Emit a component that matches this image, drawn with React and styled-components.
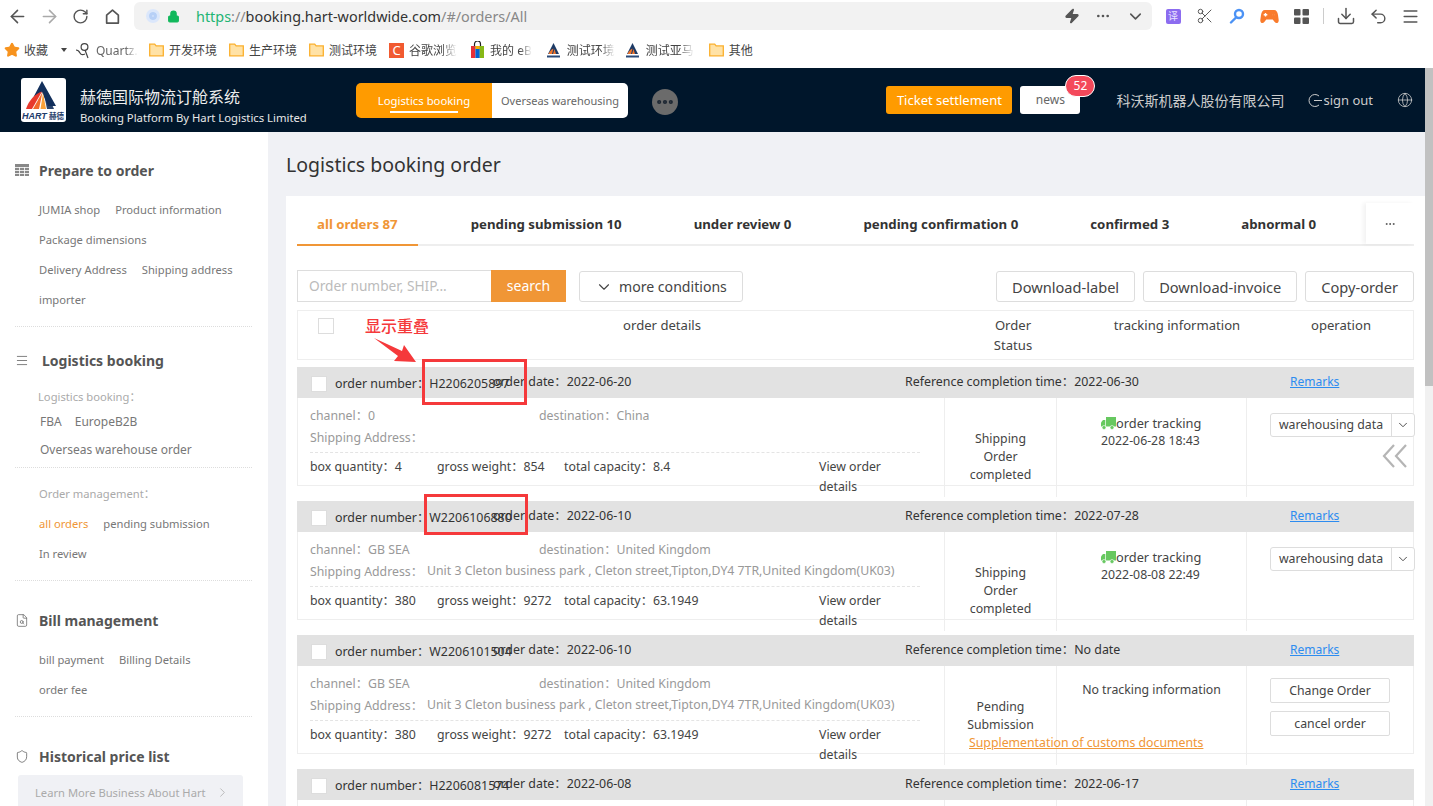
import React from 'react';
import styled, { createGlobalStyle } from 'styled-components';
import {
  ArrowLeft, ArrowRight, RotateCw, Lock, Zap, MoreHorizontal, ChevronDown, Scissors,
  Download, Undo2, Menu, Star, Globe, ChevronRight, FileSearch, Shield,
} from 'lucide-react';

const FONT = '"Noto Sans", "Noto Sans CJK SC", sans-serif';

const GlobalStyle = createGlobalStyle`
  html, body { margin: 0; padding: 0; height: 100%; overflow: hidden; }
  body { font-family: ${FONT}; background: #fff; }
  * { box-sizing: border-box; }
`;

const BOOKMARKS = [
  { icon: 'folder', text: '开发环境', gap: 12 },
  { icon: 'folder', text: '生产环境', gap: 12 },
  { icon: 'folder', text: '测试环境', gap: 12 },
  { icon: 'c', text: '谷歌浏览', gap: 13, fade: true },
  { icon: 'bag', text: '我的 eB', gap: 13, fade: true },
  { icon: 'hart', text: '测试环境', gap: 9, fade: true },
  { icon: 'hart', text: '测试亚马', gap: 15, fade: true },
  { icon: 'folder', text: '其他', gap: 0 },
];

const TABS = [
  { label: 'all orders 87', active: true },
  { label: 'pending submission 10' },
  { label: 'under review 0' },
  { label: 'pending confirmation 0' },
  { label: 'confirmed 3' },
  { label: 'abnormal 0' },
];

const UK = 'Unit 3 Cleton business park , Cleton street,Tipton,DY4 7TR,United Kingdom(UK03)';

const ORDERS = [
  {
    number: 'H2206205897', date: '2022-06-20', ref: '2022-06-30', channel: '0', dest: 'China', address: '',
    box: '4', weight: '854', capacity: '8.4', status: ['Shipping', 'Order', 'completed'],
    tracking: '2022-06-28 18:43', mark: { left: 125, top: -8, w: 105, h: 46 },
  },
  {
    number: 'W2206106880', date: '2022-06-10', ref: '2022-07-28', channel: 'GB SEA', dest: 'United Kingdom', address: UK,
    box: '380', weight: '9272', capacity: '63.1949', status: ['Shipping', 'Order', 'completed'],
    tracking: '2022-08-08 22:49', mark: { left: 127, top: -7, w: 104, h: 41 },
  },
  {
    number: 'W2206101504', date: '2022-06-10', ref: 'No date', channel: 'GB SEA', dest: 'United Kingdom', address: UK,
    box: '380', weight: '9272', capacity: '63.1949', status: ['Pending', 'Submission'], pending: true,
  },
  {
    number: 'H2206081574', date: '2022-06-08', ref: '2022-06-17', channel: 'GB SEA', dest: 'United Kingdom', address: UK,
    box: '380', weight: '9272', capacity: '63.1949', status: [],
  },
];

const Root = styled.div`
  width: 100%;
  height: 100vh;
  display: flex;
  flex-direction: column;
  overflow: hidden;
`;

const Toolbar = styled.div`
  height: 36px;
  display: flex;
  align-items: flex-start;
  padding-top: 2px;
  color: #555;
`;

const NavButton = styled.div`
  width: 31.5px;
  height: 28px;
  display: flex;
  align-items: center;
  justify-content: center;
  color: ${p => (p.$off ? '#aaa' : '#555')};
`;

const NavGroup = styled.div`
  display: flex;
  padding-left: 2px;
  width: 134px;
`;

const AddressBar = styled.div`
  width: 1018px;
  height: 28px;
  background: #f2f2f2;
  border-radius: 6px;
  display: flex;
  align-items: center;
  padding: 0 10px;
`;

const SiteDot = styled.span`
  width: 14px;
  height: 14px;
  border-radius: 50%;
  background: #cfe0fb;
  border: 3px solid #dbe7fb;
  box-shadow: inset 0 0 0 3px #b7d0f7;
  margin: 0 7px 0 2px;
`;

const Url = styled.div`
  margin-left: 16px;
  font-size: 14.4px;
  color: #333;
  white-space: nowrap;
`;

const UrlPart = styled.span`
  color: ${p => p.$color};
`;

const BarRight = styled.div`
  margin-left: auto;
  margin-right: -3px;
  display: flex;
  align-items: center;
  gap: 15px;
  color: #555;
`;

const Extensions = styled.div`
  display: flex;
  align-items: center;
  height: 28px;
  margin-left: 5px;
`;

const ExtSlot = styled.div`
  width: 32px;
  height: 28px;
  display: flex;
  align-items: center;
  justify-content: center;
`;

const ExtDivider = styled.div`
  width: 1px;
  height: 16px;
  background: #ccc;
  margin: 0 6px 0 6px;
`;

const YiBadge = styled.span`
  width: 15px;
  height: 15px;
  border-radius: 2px;
  background: #8c6cf0;
  color: #e9e2ff;
  font-size: 10px;
  line-height: 15px;
  text-align: center;
`;

const Bookmarks = styled.div`
  height: 32px;
  display: flex;
  align-items: center;
  padding: 0 0 4px 4px;
  font-size: 12px;
  color: #444;
  white-space: nowrap;
`;

const Favorites = styled.div`
  display: flex;
  align-items: center;
  gap: 4px;
  width: 71px;
`;

const Caret = styled.span`
  width: 0;
  height: 0;
  margin-left: 9px;
  border-left: 3.5px solid transparent;
  border-right: 3.5px solid transparent;
  border-top: 4px solid #444;
`;

const Mark = styled.div`
  display: flex;
  align-items: center;
  gap: 5px;
  margin-right: ${p => p.$gap}px;
`;

const MarkText = styled.span`
  ${p => p.$fade && `
    -webkit-mask-image: linear-gradient(to right, #000 70%, transparent);
    mask-image: linear-gradient(to right, #000 70%, transparent);
  `}
`;

const QuartzMark = styled(Mark)`
  width: 74px;
  color: #666;
`;

const CTile = styled.span`
  width: 15px;
  height: 15px;
  background: #f15a30;
  color: #fff;
  font-size: 13px;
  line-height: 15px;
  text-align: center;
`;

const Frame = styled.div`
  flex: 1;
  min-height: 0;
  display: flex;
`;

const Scrollbar = styled.div`
  width: 8px;
  background: #f1f1f1;
`;

const ScrollThumb = styled.div`
  height: 318px;
  background: #c1c1c1;
`;

const Page = styled.div`
  flex: 1;
  min-width: 0;
  display: flex;
  flex-direction: column;
  position: relative;
`;

const Header = styled.header`
  height: 64px;
  flex: none;
  background: #00162b;
  display: flex;
  align-items: center;
  padding-left: 21px;
  color: #fff;
`;

const Brand = styled.div`
  width: 335px;
  display: flex;
  align-items: center;
  gap: 14px;
`;

const BrandText = styled.div`
  display: flex;
  flex-direction: column;
  gap: 1px;
  padding-top: 10px;
  white-space: nowrap;
`;

const BrandTitle = styled.div`
  font-size: 16px;
  line-height: 24px;
  color: #eee;
`;

const BrandSub = styled.div`
  font-size: 11.3px;
  line-height: 16px;
  color: #e8e8e8;
`;

const ModeSwitch = styled.div`
  width: 272px;
  height: 35px;
  margin-top: 1px;
  border-radius: 5px;
  overflow: hidden;
  display: flex;
`;

const ModeItem = styled.div`
  width: 136px;
  display: flex;
  align-items: center;
  justify-content: center;
  position: relative;
  font-size: ${p => (p.$active ? 11.3 : 11)}px;
  white-space: nowrap;
  background: ${p => (p.$active ? '#ff9b00' : '#fff')};
  color: ${p => (p.$active ? '#fff' : '#666')};
  ${p => p.$active && `
    &::after {
      content: '';
      position: absolute;
      left: 34px;
      bottom: 5px;
      width: 68px;
      height: 2px;
      background: #fff;
    }
  `}
`;

const MoreCircle = styled.div`
  width: 26px;
  height: 26px;
  margin: 3px 0 0 24px;
  border-radius: 50%;
  background: #6b6b6b;
  display: flex;
  align-items: center;
  justify-content: center;
  color: #1d2733;
`;

const HeaderRight = styled.div`
  margin-left: auto;
  display: flex;
  align-items: center;
  padding-right: 12px;
`;

const TicketButton = styled.div`
  width: 126px;
  height: 28px;
  border-radius: 3px;
  background: #ff9b00;
  font-size: 13px;
  line-height: 28px;
  text-align: center;
  white-space: nowrap;
`;

const NewsButton = styled.div`
  width: 60px;
  height: 28px;
  margin-left: 8px;
  border-radius: 3px;
  background: #fff;
  color: #666;
  font-size: 12px;
  line-height: 28px;
  text-align: center;
  position: relative;
`;

const Badge = styled.span`
  position: absolute;
  right: -15px;
  top: -11px;
  width: 30px;
  height: 22px;
  border-radius: 11px;
  border: 1px solid #fff;
  background: #f4495b;
  color: #fff;
  font-size: 12px;
  line-height: 20px;
  text-align: center;
`;

const Company = styled.div`
  margin-left: 36px;
  font-size: 14px;
  color: #ccc;
  white-space: nowrap;
`;

const SignOut = styled.div`
  margin-left: 24px;
  display: flex;
  align-items: center;
  font-size: 13px;
  color: #ccc;
  white-space: nowrap;
`;

const GlobeSlot = styled.div`
  margin-left: 24px;
  display: flex;
  color: #ccc;
`;

const Body = styled.div`
  flex: 1;
  min-height: 0;
  display: flex;
  overflow: hidden;
`;

const Sidebar = styled.aside`
  width: 268px;
  flex: none;
  background: #fff;
  padding: 27px 16px 0 15px;
`;

const SideSection = styled.section`
  border-bottom: ${p => (p.$last ? 'none' : '1px dotted #ddd')};
  padding-bottom: ${p => p.$pb ?? 12}px;
  margin-bottom: ${p => p.$mb ?? 22}px;
`;

const SideTitle = styled.div`
  display: flex;
  align-items: center;
  gap: ${p => p.$gap ?? 10}px;
  height: 22px;
  margin-bottom: ${p => p.$after ?? 13}px;
  font-size: 14px;
  font-weight: 700;
  color: #555;
  white-space: nowrap;
`;

const SideIcon = styled.span`
  width: 14px;
  display: flex;
  justify-content: center;
  color: #666;
`;

const SideRow = styled.div`
  display: flex;
  gap: ${p => p.$gap ?? 15}px;
  height: ${p => p.$h ?? 30}px;
  align-items: center;
  padding-left: ${p => p.$pl ?? 24}px;
  font-size: ${p => p.$size ?? 11.2}px;
  color: ${p => p.$color ?? '#777'};
  white-space: nowrap;
`;

const SideLink = styled.span`
  color: ${p => (p.$active ? '#f09636' : 'inherit')};
`;

const LearnMore = styled.div`
  width: 225px;
  height: 40px;
  margin-left: 3px;
  padding: 0 0 6px 17px;
  border-radius: 3px;
  background: #f0f1f5;
  color: #aaa;
  font-size: 11.2px;
  display: flex;
  align-items: center;
  gap: 9px;
  white-space: nowrap;
`;

const Main = styled.main`
  flex: 1;
  min-width: 0;
  background: #f0f1f5;
  padding-left: 18px;
`;

const Heading = styled.h1`
  margin: 0;
  height: 64px;
  font-size: 19.5px;
  font-weight: 400;
  line-height: 66px;
  color: #333;
  white-space: nowrap;
`;

const Panel = styled.div`
  background: #fff;
  height: 700px;
  padding: 7px 11px 0;
`;

const TabBar = styled.div`
  height: 43px;
  display: flex;
  position: relative;
  border-bottom: 2px solid #eee;
`;

const Tab = styled.div`
  height: 43px;
  padding: 0 20px;
  margin-right: 32px;
  display: flex;
  align-items: center;
  font-size: 13.25px;
  font-weight: 700;
  white-space: nowrap;
  color: ${p => (p.$active ? '#f09636' : '#333')};
  border-bottom: 2px solid ${p => (p.$active ? '#f09636' : 'transparent')};
  &:first-child { margin-right: 33px; }
`;

const TabMore = styled.div`
  position: absolute;
  right: 0;
  top: 0;
  bottom: 0;
  width: 48px;
  background: #fff;
  box-shadow: -3px 0 4px rgba(0, 0, 0, 0.05);
  display: flex;
  align-items: center;
  justify-content: center;
  color: #555;
`;

const FilterRow = styled.div`
  display: flex;
  align-items: flex-start;
  margin-top: 24px;
  height: 40px;
`;

const SearchInput = styled.div`
  width: 194px;
  height: 32px;
  border: 1px solid #ddd;
  border-right: none;
  padding-left: 11px;
  font-size: 13.7px;
  line-height: 29px;
  color: #bbb;
  white-space: nowrap;
`;

const SearchButton = styled.div`
  width: 75px;
  height: 32px;
  background: #f09636;
  color: #fff;
  font-size: 14px;
  line-height: 31px;
  text-align: center;
`;

const OutlineButton = styled.div`
  height: 31px;
  padding: 0 15px;
  margin-top: 1px;
  margin-left: ${p => p.$ml ?? 8}px;
  ${p => p.$push && 'margin-left: auto;'}
  border: 1px solid #ddd;
  border-radius: 3px;
  display: flex;
  align-items: center;
  gap: 6px;
  font-size: ${p => p.$size ?? 14.6}px;
  color: #444;
  white-space: nowrap;
`;

const TableHead = styled.div`
  height: 50px;
  border: 1px solid #eee;
  display: grid;
  grid-template-columns: 60px 608px 94px 234px 94px;
  font-size: 13.1px;
  line-height: 20px;
  color: #444;
  text-align: center;
  padding-top: 4px;
`;

const CheckBox = styled.span`
  display: block;
  width: 16px;
  height: 16px;
  background: #fff;
  border: 1px solid #ddd;
`;

const HeadCheck = styled.div`
  padding: 3px 0 0 20px;
`;

const HeadCell = styled.div`
  padding: 0 16px;
`;

const OrderList = styled.div`
  margin-top: 7px;
`;

const Order = styled.article`
  height: 134px;
`;

const OrderHeader = styled.div`
  height: 31px;
  background: #e2e2e2;
  display: flex;
  align-items: center;
  padding-bottom: 3px;
  position: relative;
  font-size: 12.4px;
  color: #333;
  white-space: nowrap;
`;

const HeaderCheck = styled.div`
  width: 38px;
  padding: 5px 0 0 14px;
`;

const NumberCell = styled.div`
  width: 158px;
  padding-top: 4px;
`;

const DateCell = styled.div`
  width: 412px;
`;

const RefCell = styled.div`
  width: 385px;
`;

const RemarkLink = styled.a`
  font-size: 12px;
  color: #2d8cf0;
  text-decoration: underline;
`;

const RedBox = styled.div`
  position: absolute;
  border: 3px solid #f5393b;
  pointer-events: none;
`;

const OrderBody = styled.div`
  height: 88px;
  display: grid;
  grid-template-columns: 647px 112px 190px 168px;
  border: 1px solid #eee;
  border-top: none;
  font-size: 12.3px;
  color: #444;
`;

const DetailCell = styled.div`
  padding: 6px 24px 0 12px;
  border-right: 1px solid #eee;
`;

const InfoLine = styled.div`
  display: flex;
  height: 21px;
  align-items: center;
  color: #999;
  white-space: nowrap;
  margin-bottom: 1px;
`;

const InfoChannel = styled.span`
  width: 229px;
`;

const InfoValue = styled.span`
  margin-left: 4px;
`;

const StatLine = styled.div`
  display: flex;
  border-top: 1px dashed #e4e4e4;
  margin-top: 5px;
  padding-top: 4px;
  line-height: 20px;
  white-space: nowrap;
`;

const Stat = styled.span`
  width: 127px;
`;

const ViewLink = styled.span`
  width: 90px;
  margin-left: 128px;
  white-space: normal;
`;

const StatusCell = styled.div`
  border-right: 1px solid #eee;
  padding-top: 32px;
  line-height: 18px;
  text-align: center;
  position: relative;
  white-space: nowrap;
`;

const CustomsLink = styled.div`
  margin-left: 24px;
  width: 234px;
  text-align: left;
  color: #f09636;
  text-decoration: underline;
`;

const TrackCell = styled.div`
  border-right: 1px solid #eee;
  padding-top: ${p => (p.$center ? 15 : 16)}px;
  line-height: 18px;
  text-align: ${p => (p.$center ? 'center' : 'left')};
  padding-left: ${p => (p.$center ? 0 : 44)}px;
  white-space: nowrap;
`;

const TrackTitle = styled.div`
  display: flex;
  align-items: center;
  font-size: 12.8px;
`;

const OpCell = styled.div`
  padding: ${p => (p.$stacked ? 12 : 15)}px 0 0 23px;
  display: flex;
  flex-direction: column;
  align-items: flex-start;
  gap: 8px;
`;

const SplitButton = styled.div`
  width: 145px;
  height: 24px;
  border: 1px solid #ddd;
  border-radius: 3px;
  display: flex;
  background: #fff;
  font-size: 12.3px;
  line-height: 22px;
  white-space: nowrap;
`;

const SplitLabel = styled.span`
  width: 121px;
  text-align: center;
  border-right: 1px solid #ddd;
`;

const SplitCaret = styled.span`
  flex: 1;
  display: flex;
  align-items: center;
  justify-content: center;
`;

const PlainButton = styled.div`
  width: 120px;
  height: 25px;
  border: 1px solid #ddd;
  border-radius: 2px;
  font-size: 12.3px;
  line-height: 23px;
  text-align: center;
`;

const CollapseArrow = styled.div`
  position: absolute;
  left: 1382px;
  top: 376px;
  display: flex;
`;

const AnnotationText = styled.div`
  position: absolute;
  left: 365px;
  top: 246px;
  font-size: 16px;
  line-height: 24px;
  color: #f5393b;
  font-weight: 500;
  white-space: nowrap;
`;

const AnnotationArrow = styled.svg`
  position: absolute;
  left: 372px;
  top: 268px;
`;

const FolderIcon = () => (
  <svg width="15" height="14" viewBox="0 0 15 14">
    <path d="M.7 12.8V1.2h5l1.4 1.7h7.2v9.900z" fill="#ffe2a6" stroke="#fbb02d" strokeWidth="1.3" />
  </svg>
);

const BagIcon = () => (
  <svg width="15" height="18" viewBox="0 0 15 18">
    <path d="M4.5 5V3a3 3 0 0 1 6 0v2" fill="none" stroke="#222" strokeWidth="1.2" />
    <rect x="1" y="5" width="4.4" height="12" fill="#e53238" />
    <rect x="5.4" y="5" width="4.4" height="12" fill="#0064d2" />
    <rect x="9.8" y="5" width="4.2" height="12" fill="#86b817" />
    <rect x="5.4" y="5" width="4.4" height="3" fill="#f5af02" />
  </svg>
);

const HartMini = () => (
  <svg width="17" height="17" viewBox="0 0 17 17">
    <path d="M8.5 1 14 12H3z" fill="#1d3b66" />
    <path d="M3.5 12c1.4-3 3-4.5 5-5.5L7 12zM8 12l1.5-5 1.500 5z" fill="#f0762d" />
    <rect x="2" y="13.5" width="13" height="2" fill="#2a4a78" />
  </svg>
);

const QuartzIcon = () => (
  <svg width="16" height="17" viewBox="0 0 16 17" fill="none" stroke="#444" strokeWidth="1.2">
    <circle cx="9.5" cy="5" r="3.4" />
    <path d="M1 8c2 0 3 1 4 3s3 2 5 1M10 8l3 8" />
  </svg>
);

const HomeIcon = () => (
  <svg width="17" height="17" viewBox="0 0 16 16" fill="none" stroke="#555" strokeWidth="1.6">
    <path d="M2.5 14.2V6.800L8 2l5.500 4.800v7.400z" strokeLinejoin="round" />
  </svg>
);

const Gamepad = () => (
  <svg width="19" height="15" viewBox="0 0 19 15">
    <path d="M5 1h9c2.500 0 3.500 2 4 5l.7 5c.3 2.800-2.500 4-4 2l-2-2.500H6.300l-2 2.500c-1.500 2-4.300.8-4-2l.7-5C1.500 3 2.500 1 5 1z" fill="#f97b2c" />
    <path d="M5.500 4v3.500M3.700 5.700h3.600M12 5.700h.1M14.500 5.700h.1" stroke="#fff" strokeWidth="1.400" />
  </svg>
);

const Tiles = () => (
  <svg width="15" height="15" viewBox="0 0 15 15" fill="#555">
    <rect width="6.500" height="6.500" rx="1" />
    <rect x="8.500" width="6.500" height="6.500" rx="1" />
    <rect y="8.500" width="6.500" height="6.500" rx="1" />
    <rect x="8.500" y="8.500" width="6.500" height="6.500" rx="1" />
  </svg>
);

const BlueLens = () => (
  <svg width="16" height="16" viewBox="0 0 16 16" fill="none" stroke="#4b92f5" strokeWidth="2.400">
    <circle cx="10" cy="6" r="4" />
    <path d="M7 9.500 2 14.500" strokeLinecap="round" />
  </svg>
);

const GridIcon = () => (
  <svg width="14" height="12" viewBox="0 0 14 12">
    <rect width="14" height="12" fill="#888" />
    <path d="M0 3.500h14M0 6.500h14M0 9.500h14M4.500 3v9M9.500 3v9" stroke="#fff" strokeWidth=".8" />
  </svg>
);

const SignOutIcon = () => (
  <svg width="15" height="15" viewBox="0 0 15 15" fill="none" stroke="#ccc" strokeWidth="1">
    <path d="M11 3a6 6 0 1 0 0 9" />
    <path d="M6 7.500h8" />
  </svg>
);

const TruckIcon = () => (
  <svg width="15" height="14" viewBox="0 0 15 14" fill="#67c860">
    <rect x="5" y="1" width="10" height="9.500" />
    <path d="M4.300 4H2L0 6.500v4h4.300z" />
    <circle cx="3" cy="11.500" r="2" stroke="#fff" strokeWidth=".6" />
    <circle cx="11" cy="11.500" r="2" stroke="#fff" strokeWidth=".6" />
  </svg>
);

const Logo = () => (
  <svg width="45" height="44" viewBox="0 0 45 44">
    <rect width="45" height="44" rx="3" fill="#fff" />
    <path d="M21 3 35 28H27L21 14 12 20z" fill="#13305c" />
    <path d="M5 31C8 22 14 16 21 13.500L11 31z" fill="#e8392c" />
    <path d="M12 31 21.500 14 18 31z" fill="#f26a2c" />
    <path d="M19.500 31 22 15 25 31z" fill="#f8a13a" />
    <path d="M26 31 22.500 14 30 24 33 31z" fill="#13305c" opacity=".9" />
    <text x="1" y="41" fontFamily="Liberation Sans, sans-serif" fontStyle="italic" fontWeight="700" fontSize="9" fill="#1f3d6b">HART</text>
    <text x="28" y="41" fontFamily="Noto Sans CJK SC, sans-serif" fontWeight="700" fontSize="7.500" fill="#1f3d6b">赫德</text>
  </svg>
);

const MARK_ICONS = {
  folder: <FolderIcon />,
  c: <CTile>C</CTile>,
  bag: <BagIcon />,
  hart: <HartMini />,
};

const OrderRow = ({ order }) => (
  <Order>
    <OrderHeader>
      <HeaderCheck><CheckBox /></HeaderCheck>
      <NumberCell>order number：{order.number}</NumberCell>
      <DateCell>order date：{order.date}</DateCell>
      <RefCell>Reference completion time：{order.ref}</RefCell>
      <RemarkLink>Remarks</RemarkLink>
      {order.mark && (
        <RedBox
          style={{ left: order.mark.left, top: order.mark.top, width: order.mark.w, height: order.mark.h }}
        />
      )}
    </OrderHeader>
    <OrderBody>
      <DetailCell>
        <InfoLine>
          <InfoChannel>channel：{order.channel}</InfoChannel>
          <span>destination：{order.dest}</span>
        </InfoLine>
        <InfoLine>
          Shipping Address：<InfoValue>{order.address}</InfoValue>
        </InfoLine>
        <StatLine>
          <Stat>box quantity：{order.box}</Stat>
          <Stat>gross weight：{order.weight}</Stat>
          <Stat>total capacity：{order.capacity}</Stat>
          <ViewLink>View order details</ViewLink>
        </StatLine>
      </DetailCell>
      <StatusCell>
        {order.status.map(line => <div key={line}>{line}</div>)}
        {order.pending && <CustomsLink>Supplementation of customs documents</CustomsLink>}
      </StatusCell>
      {order.tracking ? (
        <TrackCell>
          <TrackTitle><TruckIcon />order tracking</TrackTitle>
          {order.tracking}
        </TrackCell>
      ) : (
        <TrackCell $center>{order.status.length ? 'No tracking information' : ''}</TrackCell>
      )}
      <OpCell $stacked={order.pending}>
        {order.tracking && (
          <SplitButton>
            <SplitLabel>warehousing data</SplitLabel>
            <SplitCaret><ChevronDown size={14} strokeWidth={1.6} color="#444" /></SplitCaret>
          </SplitButton>
        )}
        {order.pending && (
          <>
            <PlainButton>Change Order</PlainButton>
            <PlainButton>cancel order</PlainButton>
          </>
        )}
      </OpCell>
    </OrderBody>
  </Order>
);

export default function App() {
  return (
    <Root>
      <GlobalStyle />
      <Toolbar>
        <NavGroup>
          <NavButton><ArrowLeft size={21} strokeWidth={1.8} /></NavButton>
          <NavButton $off><ArrowRight size={21} strokeWidth={1.8} /></NavButton>
          <NavButton><RotateCw size={17} strokeWidth={2} /></NavButton>
          <NavButton><HomeIcon /></NavButton>
        </NavGroup>
        <AddressBar>
          <SiteDot />
          <Lock size={13} color="#12b85c" fill="#12b85c" strokeWidth={2} />
          <Url>
            <UrlPart $color="#22b573">https</UrlPart>
            <UrlPart $color="#888">://</UrlPart>
            booking.hart-worldwide.com
            <UrlPart $color="#888">/#/orders/All</UrlPart>
          </Url>
          <BarRight>
            <Zap size={16} color="#555" fill="#555" />
            <MoreHorizontal size={16} />
            <ChevronDown size={19} />
          </BarRight>
        </AddressBar>
        <Extensions>
          <ExtSlot><YiBadge>译</YiBadge></ExtSlot>
          <ExtSlot><Scissors size={18} strokeWidth={1.3} /></ExtSlot>
          <ExtSlot><BlueLens /></ExtSlot>
          <ExtSlot><Gamepad /></ExtSlot>
          <ExtSlot><Tiles /></ExtSlot>
          <ExtDivider />
          <ExtSlot><Download size={20} strokeWidth={1.8} /></ExtSlot>
          <ExtSlot><Undo2 size={19} strokeWidth={1.8} /></ExtSlot>
          <ExtSlot><Menu size={19} strokeWidth={1.8} /></ExtSlot>
        </Extensions>
      </Toolbar>
      <Bookmarks>
        <Favorites>
          <Star size={16} color="#f7931e" fill="#f7931e" />
          收藏
          <Caret />
        </Favorites>
        <QuartzMark $gap={0}>
          <QuartzIcon />
          <MarkText $fade>Quartz.</MarkText>
        </QuartzMark>
        {BOOKMARKS.map((item, i) => (
          <Mark key={i} $gap={item.gap}>
            {MARK_ICONS[item.icon]}
            <MarkText $fade={item.fade}>{item.text}</MarkText>
          </Mark>
        ))}
      </Bookmarks>
      <Frame>
        <Page>
          <Header>
            <Brand>
              <Logo />
              <BrandText>
                <BrandTitle>赫德国际物流订舱系统</BrandTitle>
                <BrandSub>Booking Platform By Hart Logistics Limited</BrandSub>
              </BrandText>
            </Brand>
            <ModeSwitch>
              <ModeItem $active>Logistics booking</ModeItem>
              <ModeItem>Overseas warehousing</ModeItem>
            </ModeSwitch>
            <MoreCircle><MoreHorizontal size={20} strokeWidth={3} /></MoreCircle>
            <HeaderRight>
              <TicketButton>Ticket settlement</TicketButton>
              <NewsButton>news<Badge>52</Badge></NewsButton>
              <Company>科沃斯机器人股份有限公司</Company>
              <SignOut><SignOutIcon />sign out</SignOut>
              <GlobeSlot><Globe size={16} strokeWidth={1.2} /></GlobeSlot>
            </HeaderRight>
          </Header>
          <Body>
            <Sidebar>
              <SideSection>
                <SideTitle><SideIcon><GridIcon /></SideIcon>Prepare to order</SideTitle>
                <SideRow><SideLink>JUMIA shop</SideLink><SideLink>Product information</SideLink></SideRow>
                <SideRow><SideLink>Package dimensions</SideLink></SideRow>
                <SideRow><SideLink>Delivery Address</SideLink><SideLink>Shipping address</SideLink></SideRow>
                <SideRow><SideLink>importer</SideLink></SideRow>
              </SideSection>
              <SideSection $pb={3} $mb={10}>
                <SideTitle $gap={13}><SideIcon><Menu size={15} strokeWidth={1.4} /></SideIcon>Logistics booking</SideTitle>
                <SideRow $pl={23} $h={24} $color="#aaa">Logistics booking：</SideRow>
                <SideRow $pl={25} $h={26} $gap={13} $size={12}><SideLink>FBA</SideLink><SideLink>EuropeB2B</SideLink></SideRow>
                <SideRow $pl={25} $size={12}><SideLink>Overseas warehouse order</SideLink></SideRow>
              </SideSection>
              <SideSection $mb={28}>
                <SideRow $color="#aaa">Order management：</SideRow>
                <SideRow><SideLink $active>all orders</SideLink><SideLink>pending submission</SideLink></SideRow>
                <SideRow><SideLink>In review</SideLink></SideRow>
              </SideSection>
              <SideSection $mb={28}>
                <SideTitle><SideIcon><FileSearch size={15} strokeWidth={1.3} /></SideIcon>Bill management</SideTitle>
                <SideRow><SideLink>bill payment</SideLink><SideLink>Billing Details</SideLink></SideRow>
                <SideRow><SideLink>order fee</SideLink></SideRow>
              </SideSection>
              <SideSection $last $pb={0} $mb={0}>
                <SideTitle $after={8}><SideIcon><Shield size={15} strokeWidth={1.4} /></SideIcon>Historical price list</SideTitle>
              </SideSection>
              <LearnMore>Learn More Business About Hart<ChevronRight size={15} strokeWidth={1.2} /></LearnMore>
            </Sidebar>
            <Main>
              <Heading>Logistics booking order</Heading>
              <Panel>
                <TabBar>
                  {TABS.map(tab => <Tab key={tab.label} $active={tab.active}>{tab.label}</Tab>)}
                  <TabMore><MoreHorizontal size={12} /></TabMore>
                </TabBar>
                <FilterRow>
                  <SearchInput>Order number, SHIP...</SearchInput>
                  <SearchButton>search</SearchButton>
                  <OutlineButton $ml={13} $size={14.1}><ChevronDown size={18} strokeWidth={1.5} />more conditions</OutlineButton>
                  <OutlineButton $push>Download-label</OutlineButton>
                  <OutlineButton>Download-invoice</OutlineButton>
                  <OutlineButton>Copy-order</OutlineButton>
                </FilterRow>
                <TableHead>
                  <HeadCheck><CheckBox /></HeadCheck>
                  <HeadCell>order details</HeadCell>
                  <HeadCell>Order Status</HeadCell>
                  <HeadCell>tracking information</HeadCell>
                  <HeadCell>operation</HeadCell>
                </TableHead>
                <OrderList>
                  {ORDERS.map(order => <OrderRow key={order.number} order={order} />)}
                </OrderList>
              </Panel>
            </Main>
          </Body>
          <CollapseArrow>
            <svg width="26" height="24" viewBox="0 0 26 24" fill="none" stroke="#b5b5b5" strokeWidth="2.200">
              <path d="M12 1 2 12l10 11M24 1 14 12l10 11" />
            </svg>
          </CollapseArrow>
          <AnnotationText>显示重叠</AnnotationText>
          <AnnotationArrow width="46" height="28" viewBox="0 0 46 28">
            <path d="M2 2 30 15l2-6 12 17-22-1 4-5z" fill="#f5393b" />
          </AnnotationArrow>
        </Page>
        <Scrollbar><ScrollThumb /></Scrollbar>
      </Frame>
    </Root>
  );
}
